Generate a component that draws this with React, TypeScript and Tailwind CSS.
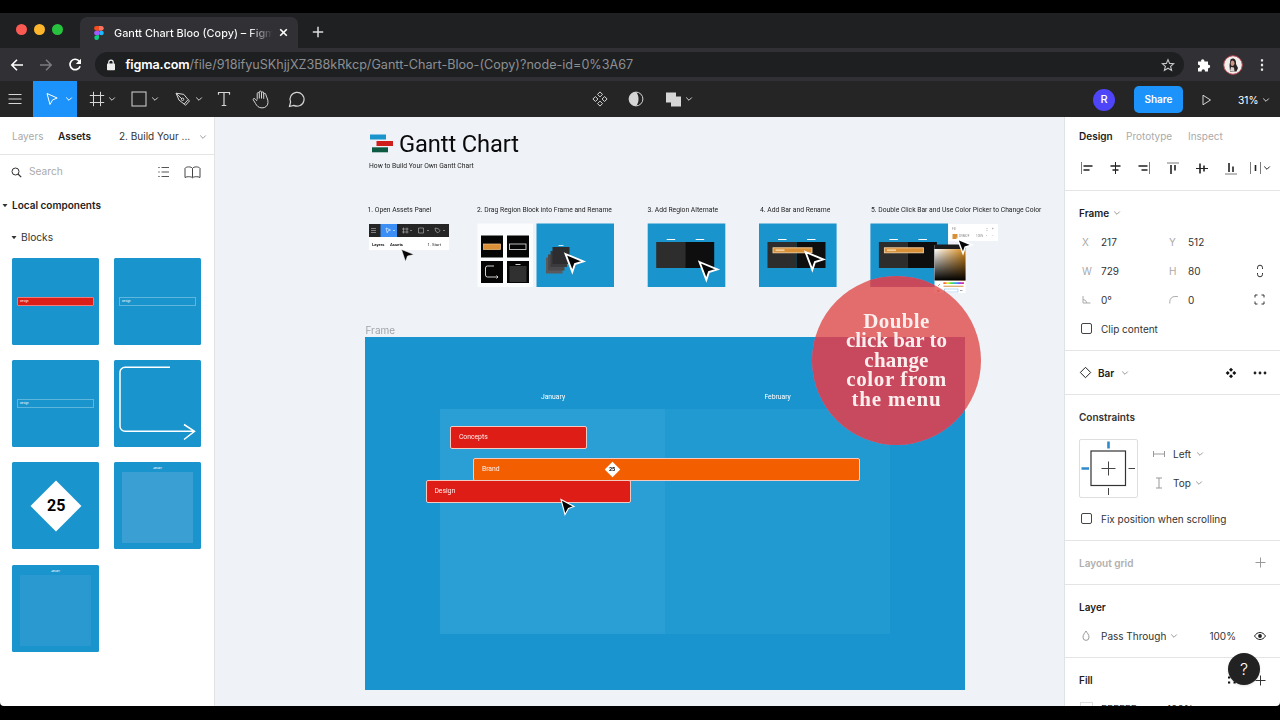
import type { ReactNode } from "react";
import clsx from "clsx";

function Svg({ w = 16, h = 16, className, children }: { w?: number; h?: number; className?: string; children: ReactNode }) {
  return (
    <svg width={w} height={h} viewBox={`0 0 ${w} ${h}`} fill="none" stroke="currentColor" strokeWidth="1" className={clsx("shrink-0", className)}>
      {children}
    </svg>
  );
}

function Chevron({ className }: { className?: string }) {
  return (
    <Svg w={8} h={6} className={className}>
      <path d="M1.2 1.5 4 4.3 6.8 1.5" />
    </Svg>
  );
}

/* ---------- Browser chrome ---------- */

function FigmaLogo() {
  return (
    <svg width="10" height="14" viewBox="0 0 10 14" className="shrink-0">
      <path d="M5 0H2.4a2.3 2.3 0 0 0 0 4.65H5z" fill="#f24e1e" />
      <path d="M5 0h2.4a2.3 2.3 0 0 1 0 4.65H5z" fill="#ff7262" />
      <path d="M5 4.65H2.4a2.3 2.3 0 0 0 0 4.65H5z" fill="#a259ff" />
      <circle cx="7.4" cy="7" r="2.35" fill="#1abcfe" />
      <path d="M5 9.3H2.4a2.35 2.35 0 1 0 2.6 2.3z" fill="#0acf83" />
    </svg>
  );
}

function TabStrip() {
  return (
    <div className="flex h-[35px] bg-[#1e2022]">
      <div className="flex w-[80px] gap-[7px] pl-4 pt-[11px]">
        <span className="size-[11px] rounded-full bg-[#fb5a52]" />
        <span className="size-[11px] rounded-full bg-[#fcb52c]" />
        <span className="size-[11px] rounded-full bg-[#27c33f]" />
      </div>
      <div className="mt-1 flex h-[31px] w-[218px] items-center rounded-t-[7px] bg-[#303035] pl-[14px]">
        <FigmaLogo />
        <div className="ml-[10px] w-[159px] overflow-hidden whitespace-nowrap bg-gradient-to-r from-white from-85% to-transparent bg-clip-text text-[10.9px] font-medium leading-4 text-transparent">
          Gantt Chart Bloo (Copy) – Figm
        </div>
        <Svg w={9} h={9} className="ml-[6px] text-white">
          <path d="M1.2 1.2l6.6 6.6M7.8 1.2 1.2 7.8" strokeWidth="1.6" />
        </Svg>
      </div>
      <Svg w={12} h={12} className="ml-[14px] mt-[13px] text-[#dcdcde]">
        <path d="M6 .8v10.4M.8 6h10.4" strokeWidth="1.5" />
      </Svg>
    </div>
  );
}

function AddressBar() {
  return (
    <div className="flex h-[33px] items-center bg-[#303035] pl-[10px]">
      <Svg w={14} h={14} className="text-white">
        <path d="M13 7H2M7 1.8 1.8 7 7 12.2" strokeWidth="1.6" />
      </Svg>
      <Svg w={14} h={14} className="ml-[15px] text-[#7c7c80]">
        <path d="M1 7h11M7 1.8 12.2 7 7 12.2" strokeWidth="1.5" />
      </Svg>
      <Svg w={14} h={14} className="ml-[15px] text-white">
        <path d="M11.4 3.4A5.2 5.2 0 1 0 12.1 8.2" strokeWidth="1.7" />
        <path d="M13 .8v5.2H7.8z" fill="currentColor" stroke="none" />
      </Svg>
      <div className="ml-[13px] flex h-[25px] w-[1089px] items-center rounded-full bg-[#1d1f21] pl-[11px]">
        <Svg w={10} h={12} className="text-[#ececec]">
          <rect x="1" y="4.6" width="8" height="6.6" rx=".8" fill="currentColor" stroke="none" />
          <path d="M2.800 5V3.300a2.200 2.200 0 0 1 4.400 0V5" strokeWidth="1.2" />
        </Svg>
        <div className="ml-[9.5px] whitespace-nowrap text-[12.620px] leading-4 text-[#8d8f92]">
          <span className="font-semibold tracking-[-0.01em] text-white">figma.com</span>/file/918ifyuSKhjjXZ3B8kRkcp/Gantt-Chart-Bloo-(Copy)?node-id=0%3A67
        </div>
        <Svg w={14} h={14} className="ml-auto mr-[9px] text-[#c8c8ca]">
          <path d="m7 1.6 1.6 3.8 4.1.3-3.1 2.7 1 4L7 10.2l-3.6 2.2 1-4-3.1-2.7 4.1-.3z" strokeWidth="1.1" />
        </Svg>
      </div>
      <Svg w={14} h={14} className="ml-[13px] text-white">
        <path
          d="M1 3.500h3.200c-.8-2.900 3.600-2.900 3.200 0H11v3.300c3-.4 2.800 3.800 0 3.400v3.300H7.900c.4-2.900-3.600-2.900-3.200 0H1v-3.500c2.700.3 2.700-3.500 0-3.200z"
          fill="currentColor"
          stroke="none"
        />
      </Svg>
      <svg width="20" height="20" viewBox="0 0 20 20" className="ml-[12px] shrink-0">
        <circle cx="10" cy="10" r="9.300" fill="#f1eeee" stroke="#b9424a" strokeWidth="1" />
        <path d="M7.500 4.500c3-2.500 6 0 5.500 4.500l2 4-1.500 3.500L7 16.500 6.500 10z" fill="#292023" />
        <ellipse cx="9.600" cy="8.300" rx="1.900" ry="2.800" fill="#c99783" />
        <path d="m8 12 3 .5.500 4L7 16z" fill="#d9d0cc" />
      </svg>
      <Svg w={4} h={14} className="ml-[17px] text-[#ececec]">
        <path d="M2 1.200v2.400M2 5.800v2.400M2 10.400v2.400" strokeWidth="2.200" />
      </Svg>
    </div>
  );
}

/* ---------- Figma toolbar ---------- */

function Toolbar() {
  return (
    <div className="flex h-9 items-center bg-[#252525] text-[#d6d6d6]">
      <div className="flex w-[33px] justify-center pr-[3px]">
        <Svg w={14} h={12}>
          <path d="M.5 1.500h13M.5 6h13M.5 10.500h13" strokeWidth="1.200" />
        </Svg>
      </div>
      <div className="flex h-full w-11 items-center bg-[#1b93fb] pl-[12px] text-white">
        <Svg w={14} h={14}>
          <path d="M2 1.500 12.200 6 7.600 7.900 5 12.500z" />
        </Svg>
        <Chevron className="ml-[6px]" />
      </div>
      <Svg w={16} h={16} className="ml-[12px]">
        <path d="M4.500.8v14.400M11.500.8v14.400M.8 4.500h14.400M.8 11.500h14.400" />
      </Svg>
      <Chevron className="ml-[3px]" />
      <Svg w={16} h={16} className="ml-[15px]">
        <rect x="1" y="1" width="14" height="14" />
      </Svg>
      <Chevron className="ml-1" />
      <Svg w={16} h={16} className="ml-[16px]">
        <path d="M1 2.200 8.800 3.400l4.300 5.200-3.900 4.500-5.200-4z M1.300 2.500 7 8M9.200 13.200l1.300 1.100 4-4.500-1.400-1.200" />
        <circle cx="7.600" cy="8.300" r="1.200" />
      </Svg>
      <Chevron className="ml-1" />
      <Svg w={14} h={16} className="ml-[14px]">
        <path d="M1.500 3.800V1.500h11v2.300M7 1.500v13M4.700 14.500h4.600" strokeWidth="1.200" />
      </Svg>
      <Svg w={18} h={19} className="ml-[21px]">
        <path d="M5.200 9.500V3.600c0-1.500 2.100-1.500 2.100 0V8.500M7.300 3.400V2.200c0-1.500 2.200-1.500 2.200 0V8.500M9.500 3c0-1.500 2.200-1.500 2.200 0v5.800M11.700 4.400c0-1.400 2.100-1.400 2.100 0 .1 2.100 2.500 4.600 2.200 8.200-.3 3.400-2.600 5.300-6 5.300-3.600 0-5.300-2.200-6.400-4.300L1.300 9.900c-.6-1.100.7-1.900 1.600-1.200l2.300 2.300" />
      </Svg>
      <Svg w={18} h={17} className="ml-[18px]">
        <path d="M1.500 15.500 2.600 11a7 6.900 0 1 1 3.200 3.400z" strokeWidth="1.200" />
      </Svg>
      <div className="ml-[286px] flex items-center">
        <Svg w={16} h={16}>
          <path d="M8 .9 10.500 3.400 8 5.900 5.500 3.400zM8 10.100l2.500 2.500L8 15.100l-2.500-2.500zM3.400 5.500 5.900 8l-2.500 2.500L.9 8zM12.600 5.500 15.100 8l-2.500 2.500L10.100 8z" />
        </Svg>
        <Svg w={16} h={16} className="ml-5">
          <circle cx="8" cy="8" r="6.900" />
          <path d="M8 1a7 7 0 0 0 0 14c1.600-1.400 2.500-4 2.500-7S9.600 2.400 8 1z" fill="currentColor" stroke="none" />
        </Svg>
        <Svg w={17} h={17} className="ml-[21px]">
          <path d="M1 1.500h10v4h5v10H6v-4H1z" fill="currentColor" stroke="none" />
        </Svg>
        <Chevron className="ml-[3px]" />
      </div>
      <div className="ml-auto flex items-center pt-px text-white">
        <span className="flex size-[22px] items-center justify-center rounded-full bg-[#4e45f8] text-[11px] font-medium">R</span>
        <span className="ml-[19px] flex h-[27px] w-[49px] items-center justify-center rounded-[5px] bg-[#1b93fb] text-[10px] font-semibold">Share</span>
        <Svg w={12} h={12} className="ml-[18px] text-[#d6d6d6]">
          <path d="M2 1.200 9.500 6 2 10.800z" />
        </Svg>
        <span className="ml-[25px] w-[20px] text-[10.200px] leading-4">31%</span>
        <Chevron className="ml-1 mr-[10px] text-[#d6d6d6]" />
      </div>
    </div>
  );
}

/* ---------- Assets panel ---------- */

const tile = "h-[87px] w-[87px] rounded-[1.500px] bg-[#1a94cc]";

function BarTile({ filled = false }: { filled?: boolean }) {
  return (
    <div className={clsx(tile, "flex items-center px-[5px]")}>
      <div className={clsx("flex h-[9px] w-full items-center border pl-[2px] text-[2.600px] leading-none text-white", filled ? "rounded-[1px] border-[#f07a7a] bg-[#dc1e18]" : "border-[#5fb6dd]")}>
        Design
      </div>
    </div>
  );
}

function RegionTile({ className, label }: { className: string; label: string }) {
  return (
    <div className={clsx(tile, "flex flex-col items-center pt-[5px]")}>
      <span className="text-[2.400px] leading-[3px] text-white">{label}</span>
      <div className={clsx("mt-[2px] size-[71px]", className)} />
    </div>
  );
}

function AssetsPanel() {
  return (
    <aside className="w-[215px] shrink-0 border-r border-[#e4e4e6] bg-white text-[#333]">
      <div className="flex h-[38px] items-center border-b border-[#e4e4e4] pl-3 pt-px text-[10px] leading-4">
        <span className="w-[46px] text-[#a9a9a9]">Layers</span>
        <span className="w-[61px] font-semibold text-[#1d1d1d]">Assets</span>
        <span className="w-[80px] whitespace-nowrap">2. Build Your ...</span>
        <Chevron className="mt-px text-[#999]" />
      </div>
      <div className="flex h-[34px] items-center pl-[11px]">
        <Svg w={11} h={11} className="text-[#333]">
          <circle cx="4.500" cy="4.500" r="3.500" />
          <path d="m7 7 3.200 3.200" strokeWidth="1.200" />
        </Svg>
        <span className="ml-[7px] w-[129px] text-[10.200px] text-[#aaa]">Search</span>
        <Svg w={12} h={12} className="text-[#555]">
          <path d="M.3 1.500h1.400M.3 6h1.400M.3 10.500h1.400M3.500 1.500H11M3.500 6H11M3.500 10.500H11" />
        </Svg>
        <Svg w={17} h={13} className="ml-[14px] text-[#444]">
          <path d="M8.500 2.500C7.800 1.200 6.300.9 4.700.9S1.500 1.400 1 2.300V11.500c1.200-.7 2.400-.8 3.700-.8s3 .2 3.800 1.100c.8-.9 2.500-1.100 3.800-1.100s2.500.1 3.700.8V2.300C15.500 1.400 13.900.9 12.300.9S9.200 1.200 8.500 2.500zV11.500" />
        </Svg>
      </div>
      <div className="flex h-8 items-center pl-[2px]">
        <Svg w={6} h={5} className="text-[#333]">
          <path d="M.5 1h5L3 4.300z" fill="currentColor" stroke="none" />
        </Svg>
        <span className="ml-1 text-[10px] font-semibold text-[#1d1d1d]">Local components</span>
      </div>
      <div className="flex h-[33px] items-center pl-[11px]">
        <Svg w={6} h={5} className="text-[#333]">
          <path d="M.5 1h5L3 4.300z" fill="currentColor" stroke="none" />
        </Svg>
        <span className="ml-1 text-[10.200px]">Blocks</span>
      </div>
      <div className="mt-1 grid grid-cols-[87px_87px] gap-x-[15px] gap-y-[15.200px] pl-3">
        <BarTile filled />
        <BarTile />
        <BarTile />
        <div className={tile}>
          <Svg w={87} h={87} className="text-white">
            <path d="M56 7.300H11a5 5 0 0 0-5 5v54a5 5 0 0 0 5 5h69M70 64.500l10.500 6.800L70 79.500" strokeWidth="1.500" />
          </Svg>
        </div>
        <div className={clsx(tile, "flex items-center justify-center")}>
          <div className="flex size-[36px] rotate-45 items-center justify-center bg-white">
            <span className="-rotate-45 font-[Roboto] text-[16px] font-bold leading-none text-black">25</span>
          </div>
        </div>
        <RegionTile label="January" className="bg-[#3a9fd3]" />
        <RegionTile label="January" className="bg-[#2a99d0]" />
      </div>
    </aside>
  );
}

/* ---------- Canvas ---------- */

function Pointer({ x, y, s = 1.05 }: { x: number; y: number; s?: number }) {
  return <path transform={`translate(${x} ${y}) scale(${s})`} d="M0 0 17 7 9 9.500 6.500 17z" fill="#050505" stroke="#fff" strokeWidth="1.800" />;
}

function StepText({ className, children }: { className: string; children: string }) {
  return <span className={clsx("absolute top-[87.500px] whitespace-nowrap font-[Roboto] text-[6.750px] leading-[10px] text-[#222]", className)}>{children}</span>;
}

function StepPictures() {
  return (
    <svg width="640" height="76" viewBox="365 220 640 76" className="absolute left-[150px] top-[103px]">
      <defs>
        <linearGradient id="hue" x1="0" x2="1">
          <stop offset="0" stopColor="#fff" />
          <stop offset="1" stopColor="#d98a16" />
        </linearGradient>
        <linearGradient id="shade" x1="0" y1="0" x2="0" y2="1">
          <stop offset="0" stopColor="#000" stopOpacity="0" />
          <stop offset="1" stopColor="#000" />
        </linearGradient>
        <linearGradient id="rainbow" x1="0" x2="1">
          <stop offset="0" stopColor="#f22" />
          <stop offset=".2" stopColor="#ee2" />
          <stop offset=".4" stopColor="#2d4" />
          <stop offset=".6" stopColor="#29f" />
          <stop offset=".8" stopColor="#82e" />
          <stop offset="1" stopColor="#f24" />
        </linearGradient>
      </defs>

      {/* 1: assets panel */}
      <rect x="369" y="224" width="80" height="26" fill="#fff" />
      <rect x="369" y="224" width="80" height="13" fill="#252525" />
      <rect x="380.500" y="224" width="16.500" height="13" fill="#3b8ff5" />
      <g stroke="#bbb" strokeWidth=".6" fill="none">
        <path d="M371 228.500h5M371 230.500h5M371 232.500h5" />
        <path d="M386 228l4.500 2-2.300.8-1 2z M393 230l1 1 1-1" stroke="#fff" />
        <path d="M403.500 227.500v6M407 227.500v6M402 229h6.500M402 232h6.500M410 230l1 1 1-1" />
        <path d="M418.500 228h5v5h-5zM427 230l1 1 1-1" />
        <path d="M435 228l3.500.8 1.500 2-2 2-2.300-1.500zM443 230l1 1 1-1" />
      </g>
      <g fontFamily="Roboto, sans-serif" fontSize="4.200" fill="#222">
        <text x="372" y="246" fontWeight="700">Layers</text>
        <text x="390" y="246" fontWeight="700">Assets</text>
        <text x="427.500" y="246">1. Start</text>
      </g>
      <path d="m401.500 249.500 12.500 5-6.500 1.500-2 5.500z" fill="#050505" stroke="#fff" strokeWidth=".5" />

      {/* 2: drag region */}
      <rect x="477.500" y="223.500" width="55.500" height="63.500" fill="#fbfcfd" />
      <path d="M481 235.500h22v22h-22zM507 235.500h22v22h-22zM481 261h22v22h-22zM507 261h22v22h-22z" fill="#050505" />
      <rect x="483.500" y="244" width="17" height="5.500" fill="#d98f36" stroke="#f3c68a" strokeWidth=".7" />
      <rect x="509.500" y="244" width="16.500" height="5.500" fill="none" stroke="#e8e8e8" strokeWidth=".8" />
      <path d="M494 266h-6.500q-2 0-2 2v7q0 2 2 2h10M496.500 275.500l1.500 1.500-1.500 1.500" fill="none" stroke="#e8e8e8" strokeWidth=".9" />
      <rect x="509.500" y="266" width="17" height="16" fill="#303030" />
      <path d="M515.500 264.500h5" stroke="#fff" strokeWidth=".8" />
      <rect x="536.500" y="223.500" width="77.500" height="63.500" fill="#1a94cc" />
      <path d="M546 257.500h16.500v16H546z" fill="#5a5a5c" />
      <path d="M548 254.500h16.500v16H548z" fill="#4a4a4c" />
      <path d="M550.500 251h16.500v16h-16.500z" fill="#3b3b3d" />
      <path d="M552.500 247h17v17h-17z" fill="#2d2d2f" />
      <path d="M558.500 245.500h5" stroke="#fff" strokeWidth=".8" />
      <Pointer x={565.500} y={254} />

      {/* 3 to 5: region, bar, colour */}
      {[647.700, 759, 870.400].map((x) => (
        <g key={x}>
          <rect x={x} y="223.500" width="77.600" height="63.500" fill="#1a94cc" />
          <rect x={x + 8.500} y="242" width="29" height="26" fill="#2d2d2d" />
          <rect x={x + 37.500} y="242" width="29" height="26" fill="#0e0e0e" />
          <path d={`M${x + 19} 239.500h8.500M${x + 48} 239.500h8.500`} stroke="#fff" strokeWidth="1" />
        </g>
      ))}
      {[773, 884.400].map((x) => (
        <g key={x}>
          <rect x={x} y="247.800" width="39" height="5" fill="#d98f36" stroke="#f6d3a2" strokeWidth=".9" />
          <rect x={x + 2.500} y="249.300" width="9" height="1.800" fill="#f0cf9d" />
        </g>
      ))}
      <Pointer x={699.500} y={262} />
      <Pointer x={805.500} y={252} />
      <rect x="948.500" y="224" width="49.500" height="17" fill="#fff" />
      <g fontFamily="Roboto, sans-serif" fontSize="3" fill="#888">
        <text x="952" y="229.500">Fill</text>
        <text x="959" y="237.300">D9882F</text>
        <text x="976" y="237.300">100%</text>
        <text x="986" y="237.300">•</text>
        <text x="986" y="229.500">∷</text>
        <text x="992" y="229.500">+</text>
        <text x="992" y="237.300">−</text>
      </g>
      <rect x="952.500" y="234" width="5" height="5" fill="#d98f36" />
      <rect x="934.500" y="245" width="31" height="48" fill="#fff" />
      <rect x="934.500" y="244.500" width="31" height="4.500" fill="#1c1c1c" />
      <rect x="934.500" y="249" width="31" height="31.500" fill="url(#hue)" />
      <rect x="934.500" y="249" width="31" height="31.500" fill="url(#shade)" />
      <rect x="943.500" y="282.300" width="20.500" height="1.600" fill="url(#rainbow)" />
      <rect x="943.500" y="285.600" width="20" height="1.400" fill="#dfae78" />
      <rect x="944.500" y="289" width="13.500" height="3" fill="#fff" stroke="#7db9e6" strokeWidth=".5" />
      <path d="M938 286l2-2M937 291h2.500M960 290.500h2.500" stroke="#777" strokeWidth=".7" />
      <Pointer x={957.500} y={239} s={0.85} />
    </svg>
  );
}

function GanttBar({ className, children }: { className: string; children: string }) {
  return (
    <div className={clsx("absolute flex h-[23px] items-center rounded-[2px] border border-[#f5c9c0] pl-[7.500px] font-[Roboto] text-[6.800px] leading-[9px] text-[#fff0ee]", className)}>
      {children}
    </div>
  );
}

function GanttFrame() {
  return (
    <div className="absolute left-[150.400px] top-[220px] h-[353.400px] w-[599.600px] bg-[#1a94cf]">
      <div className="absolute left-[75px] top-[72px] h-[224.500px] w-[225px] bg-[#2a9fd6]" />
      <div className="absolute left-[300px] top-[72px] h-[224.500px] w-[224.500px] bg-[#219ad2]" />
      <span className="absolute left-[175.500px] top-[54.500px] font-[Roboto] text-[6.800px] leading-[10px] text-white">January</span>
      <span className="absolute left-[399px] top-[54.500px] font-[Roboto] text-[6.800px] leading-[10px] text-white">February</span>
      <GanttBar className="left-[85px] top-[89px] w-[137px] bg-[#df1d17]">Concepts</GanttBar>
      <GanttBar className="left-[108px] top-[121px] w-[387px] bg-[#f35f00]">Brand</GanttBar>
      <GanttBar className="left-[60.500px] top-[143px] w-[205px] bg-[#df1d17]">Design</GanttBar>
      <div className="absolute left-[242px] top-[127px] flex size-[11px] rotate-45 items-center justify-center bg-white">
        <span className="-rotate-45 font-[Roboto] text-[5.500px] font-bold leading-none text-black">25</span>
      </div>
      <Svg w={20} h={22} className="absolute left-[194px] top-[160px]">
        <path d="M2 2.500 15 9.500 9.500 11.500 6 17.500z" fill="#050505" stroke="#fff" strokeWidth="1.100" />
      </Svg>
    </div>
  );
}

function Callout() {
  return (
    <>
      <div className="absolute left-[597px] top-[159px] size-[169px] rounded-full bg-[rgb(218,26,22)]/62" />
      {/* keeps the red channel up where the circle crosses the blue frame */}
      <div className="absolute left-[597px] top-[159px] size-[169px] rounded-full bg-[rgb(200,0,0)] mix-blend-lighten" />
      <div className="absolute left-[597px] top-[159px] flex size-[169px] flex-col items-center justify-center font-['Liberation_Serif',serif] text-[21px] font-bold leading-[19.500px] text-[#fdeeee]">
        <span className="tracking-[0.020em]">Double</span>
        <span>click bar to</span>
        <span className="tracking-[0.010em]">change</span>
        <span className="tracking-[0.030em]">color from</span>
        <span className="tracking-[0.040em]">the menu</span>
      </div>
    </>
  );
}

function Canvas() {
  return (
    <main className="relative isolate flex-1 overflow-hidden bg-[#eff3f8]">
      <svg width="24" height="20" viewBox="0 0 24 20" className="absolute left-[155px] top-[17px]">
        <rect x="0" y="0.500" width="16" height="5" fill="#1a94cc" />
        <rect x="6.500" y="7" width="16.500" height="5" fill="#cf1f1c" />
        <rect x="2" y="13.300" width="16" height="5" fill="#0c5a42" />
      </svg>
      <h1 className="absolute left-[184px] top-[11.500px] whitespace-nowrap font-[Roboto] text-[23.700px] leading-[30px] tracking-[-0.005em] text-[#0a0a0a]">Gantt Chart</h1>
      <span className="absolute left-[154px] top-[43.500px] whitespace-nowrap font-[Roboto] text-[6.750px] leading-[10px] text-[#222]">How to Build Your Own Gantt Chart</span>

      <StepText className="left-[152.500px]">1. Open Assets Panel</StepText>
      <StepText className="left-[262px]">2. Drag Region Block into Frame and Rename</StepText>
      <StepText className="left-[432.500px]">3. Add Region Alternate</StepText>
      <StepText className="left-[545px]">4. Add Bar and Rename</StepText>
      <StepText className="left-[656px]">5. Double Click Bar and Use Color Picker to Change Color</StepText>
      <StepPictures />

      <span className="absolute left-[150.500px] top-[205px] text-[10px] leading-4 text-[#a2a4a8]">Frame</span>
      <GanttFrame />
      <Callout />
    </main>
  );
}

/* ---------- Design panel ---------- */

function Section({ children, last = false }: { children: ReactNode; last?: boolean }) {
  return <section className={clsx("py-[7px]", !last && "border-b border-[#e4e4e4]")}>{children}</section>;
}

function Row({ children, className }: { children: ReactNode; className?: string }) {
  return <div className={clsx("flex h-[29px] items-center pl-[14px]", className)}>{children}</div>;
}

function Field({ icon, value }: { icon: ReactNode; value: string }) {
  return (
    <div className="flex w-[87px] items-center">
      <span className="flex w-[22px] pl-[3px] text-[#aaa]">{icon}</span>
      <span>{value}</span>
    </div>
  );
}

function Checkbox({ label }: { label: string }) {
  return (
    <Row>
      <span className="ml-[2px] size-[11px] rounded-[2px] border border-[#444]" />
      <span className="ml-[9px]">{label}</span>
    </Row>
  );
}

function Plus({ className }: { className?: string }) {
  return (
    <Svg w={11} h={11} className={className}>
      <path d="M5.500.5v10M.5 5.500h10" />
    </Svg>
  );
}

function AlignIcons() {
  return (
    <Row className="gap-[15px] text-[#222]">
      <Svg w={14} h={14}>
        <path d="M2.500 1v12" strokeOpacity=".6" />
        <path d="M4.500 5h9M4.500 9h6" strokeWidth="1.600" />
      </Svg>
      <Svg w={14} h={14}>
        <path d="M7.500 1v12" />
        <path d="M2.500 5h10M4.500 9h6" strokeWidth="1.600" />
      </Svg>
      <Svg w={14} h={14}>
        <path d="M12.500 1v12" strokeOpacity=".6" />
        <path d="M1.500 5h9M4.500 9h6" strokeWidth="1.600" />
      </Svg>
      <Svg w={14} h={14}>
        <path d="M1 2h12" strokeOpacity=".6" />
        <path d="M5 4v9M9 4v5.500" strokeWidth="1.600" />
      </Svg>
      <Svg w={14} h={14}>
        <path d="M1 7.500h12" />
        <path d="M5 2.500v10M9 4.500v6" strokeWidth="1.600" />
      </Svg>
      <Svg w={14} h={14}>
        <path d="M1 13h12" strokeOpacity=".6" />
        <path d="M5 2v9M9 5.500V11" strokeWidth="1.600" />
      </Svg>
      <div className="flex items-center">
        <Svg w={13} h={14} className="-ml-1">
          <path d="M1.500 1v12M11.500 1v12" strokeOpacity=".6" />
          <path d="M6.500 4v6" strokeWidth="1.600" />
        </Svg>
        <Chevron className="ml-px" />
      </div>
    </Row>
  );
}

function ConstraintBox() {
  return (
    <Svg w={59} h={59}>
      <rect x=".5" y=".5" width="58" height="58" rx="1.500" stroke="#dedede" />
      <rect x="12" y="12" width="34.500" height="34.500" stroke="#333" strokeWidth="1.200" />
      <path d="M29.500 22.500v14M22.500 29.500h14M29.500 49v7M49.500 29.500h6.500" stroke="#444" />
      <path d="M29.500 2.500v7M2.500 29.500h7.500" stroke="#3089cc" strokeWidth="2.600" />
    </Svg>
  );
}

function DesignPanel() {
  return (
    <aside className="relative w-[216px] shrink-0 overflow-hidden border-l border-[#dfe3e8] bg-white text-[10px] leading-4 text-[#333]">
      <div className="flex h-[36px] items-center pl-[14px] pt-[2px]">
        <span className="w-[47px] font-semibold text-[#1d1d1d]">Design</span>
        <span className="w-[62px] text-[#aaa]">Prototype</span>
        <span className="text-[#aaa]">Inspect</span>
      </div>
      <div className="h-[38px] border-b border-[#e4e4e4]">
        <AlignIcons />
      </div>

      <Section>
        <Row className="pt-px">
          <span className="font-semibold text-[#1d1d1d]">Frame</span>
          <Chevron className="ml-1 text-[#999]" />
        </Row>
        <Row>
          <Field icon="X" value="217" />
          <Field icon="Y" value="512" />
        </Row>
        <Row>
          <Field icon="W" value="729" />
          <Field icon="H" value="80" />
          <Svg w={8} h={14} className="ml-[3px] text-[#333]">
            <path d="M1.500 5V3.700a2.500 2.500 0 0 1 5 0V5M1.500 9v1.300a2.500 2.500 0 0 0 5 0V9" />
          </Svg>
        </Row>
        <Row>
          <Field
            value="0°"
            icon={
              <Svg w={9} h={9}>
                <path d="M1 1v7h7.500M1 4.500A3.800 3.800 0 0 1 4.700 8" />
              </Svg>
            }
          />
          <Field
            value="0"
            icon={
              <Svg w={9} h={9}>
                <path d="M.8 8.500V6.500a5 5 0 0 1 5-5h3" />
              </Svg>
            }
          />
          <Svg w={11} h={11} className="ml-px text-[#333]">
            <path d="M1 3.500V1h2.500M7.500 1H10v2.500M10 7.500V10H7.500M3.500 10H1V7.500" />
          </Svg>
        </Row>
        <Checkbox label="Clip content" />
      </Section>

      <Section>
        <Row>
          <Svg w={13} h={13} className="text-[#222]">
            <path d="M6.500 1.300 11.700 6.500 6.500 11.700 1.300 6.500z" />
          </Svg>
          <span className="ml-[6px] font-semibold text-[#1d1d1d]">Bar</span>
          <Chevron className="ml-[7px] text-[#999]" />
          <Svg w={12} h={12} className="ml-auto text-[#111]">
            <path d="M6 .7 8 2.700 6 4.700 4 2.700zM6 7.300 8 9.300 6 11.300 4 9.300zM2.700 4 4.700 6 2.700 8 .7 6zM9.300 4 11.300 6 9.300 8 7.300 6z" fill="currentColor" stroke="none" />
          </Svg>
          <Svg w={14} h={4} className="ml-4 mr-[13px] text-[#222]">
            <path d="M2 2h.01M7 2h.01M12 2h.01" strokeWidth="2.800" strokeLinecap="round" />
          </Svg>
        </Row>
      </Section>

      <Section>
        <Row className="pt-px font-semibold">Constraints</Row>
        <div className="mb-[6px] mt-[8px] flex pl-[14px]">
          <ConstraintBox />
          <div className="ml-[15px]">
            <div className="flex h-[29px] items-center">
              <Svg w={12} h={10} className="text-[#999]">
                <path d="M.5 2v6M11.500 2v6M.5 5h11" />
              </Svg>
              <span className="ml-2">Left</span>
              <Chevron className="ml-[5px] text-[#999]" />
            </div>
            <div className="flex h-[29px] items-center">
              <Svg w={12} h={12} className="text-[#999]">
                <path d="M3 1h6M3 11h6M6 1v10" />
              </Svg>
              <span className="ml-2">Top</span>
              <Chevron className="ml-1 text-[#999]" />
            </div>
          </div>
        </div>
        <Checkbox label="Fix position when scrolling" />
      </Section>

      <Section>
        <Row>
          <span className="font-semibold text-[#b0b0b0]">Layout grid</span>
          <Plus className="ml-auto mr-[14px] text-[#999]" />
        </Row>
      </Section>

      <Section>
        <Row className="pt-px font-semibold text-[#1d1d1d]">Layer</Row>
        <Row>
          <Svg w={14} h={12} className="text-[#999]">
            <path d="M7 1C6 3 4 4.400 4 7.200a3 3.200 0 0 0 6 0C10 4.400 8 3 7 1z" />
          </Svg>
          <span className="ml-2">Pass Through</span>
          <Chevron className="ml-1 text-[#999]" />
          <span className="ml-auto">100%</span>
          <Svg w={12} h={10} className="ml-[18px] mr-[14px] text-[#222]">
            <path d="M.5 5C2 2.700 3.800 1.500 6 1.500S10 2.700 11.500 5C10 7.300 8.200 8.500 6 8.500S2 7.300.5 5z" />
            <circle cx="6" cy="5" r="1.900" fill="currentColor" stroke="none" />
          </Svg>
        </Row>
      </Section>

      <Section last>
        <Row className="pt-px">
          <span className="font-semibold text-[#1d1d1d]">Fill</span>
          <Svg w={10} h={10} className="ml-auto text-[#111]">
            <path d="M1 2.500h2.200M6.500 2.500h2.200M1 7.500h2.200M6.500 7.500h2.200" strokeWidth="2.200" />
          </Svg>
          <Plus className="ml-[18px] mr-[14px] text-[#333]" />
        </Row>
        <Row>
          <span className="ml-px size-[13px] border border-[#ddd]" />
          <span className="ml-2 w-[66px]">EFEFEF</span>
          <span>100%</span>
        </Row>
      </Section>

      <div className="absolute bottom-[21px] right-[20px] flex size-[32px] items-center justify-center rounded-full bg-[#222] text-[16px] font-light text-white shadow">?</div>
    </aside>
  );
}

export default function App() {
  return (
    <div className="flex h-[720px] w-[1280px] flex-col overflow-hidden bg-black pb-[14px] pt-[13px] font-['Inter',sans-serif]">
      <TabStrip />
      <AddressBar />
      <Toolbar />
      <div className="flex min-h-0 flex-1 overflow-hidden rounded-b-[4px]">
        <AssetsPanel />
        <Canvas />
        <DesignPanel />
      </div>
    </div>
  );
}
